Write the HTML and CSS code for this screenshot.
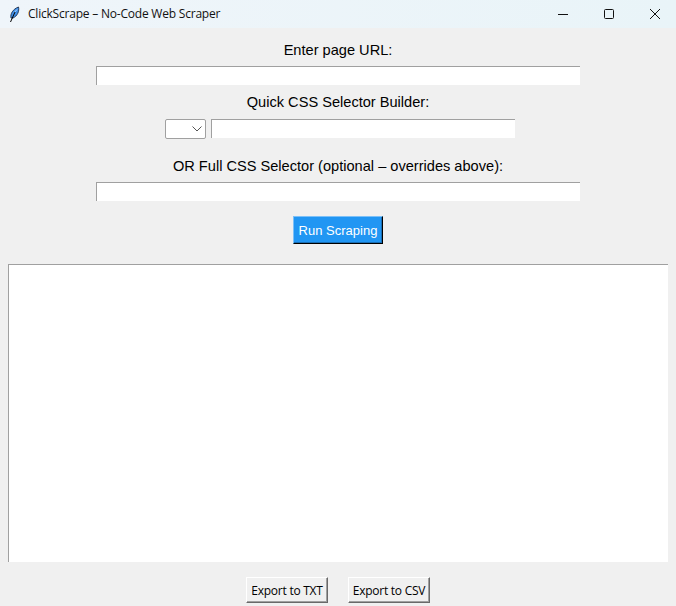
FILE: index.html
```html
<!DOCTYPE html>
<html lang="en">
<head>
<meta charset="utf-8">
<title>ClickScrape – No-Code Web Scraper</title>
<link rel="stylesheet" href="styles.css">
</head>
<body>
<div class="window">
  <header class="titlebar">
    <svg class="app-icon" width="16" height="18" viewBox="0 0 16 18">
      <path d="M5 13 C4 9 7 4 12.5 2 C13.5 6 11.5 11 7 13 Z" fill="#3f8fe8" stroke="#1a2c4a" stroke-width="0.9"/>
      <path d="M8 8 L11 4.5" stroke="#bcdcfa" stroke-width="0.9" fill="none"/>
      <path d="M4.5 17 L9 7" stroke="#000" stroke-width="1" fill="none"/>
    </svg>
    <span class="title">ClickScrape – No-Code Web Scraper</span>
    <div class="controls">
      <span class="ctl"><svg width="12" height="12" viewBox="0 0 12 12"><path d="M1 6.5H11" stroke="#111" stroke-width="1"/></svg></span>
      <span class="ctl"><svg width="12" height="12" viewBox="0 0 12 12"><rect x="1.5" y="1.5" width="9" height="9" rx="1" fill="none" stroke="#111" stroke-width="1"/></svg></span>
      <span class="ctl"><svg width="12" height="12" viewBox="0 0 12 12"><path d="M1 1L11 11M11 1L1 11" stroke="#111" stroke-width="1"/></svg></span>
    </div>
  </header>
  <main class="content">
    <label class="label label-url">Enter page URL:</label>
    <input class="entry entry-wide" type="text">
    <label class="label label-quick">Quick CSS Selector Builder:</label>
    <div class="builder">
      <div class="combo">
        <svg width="10" height="6" viewBox="0 0 10 6"><path d="M0.5 0.5L5 5L9.5 0.5" fill="none" stroke="#555" stroke-width="1"/></svg>
      </div>
      <input class="entry entry-mid" type="text">
    </div>
    <label class="label label-full">OR Full CSS Selector (optional – overrides above):</label>
    <input class="entry entry-wide" type="text">
    <button class="run" type="button">Run Scraping</button>
    <div class="output"></div>
    <div class="exports">
      <button class="export" type="button">Export to TXT</button>
      <button class="export" type="button">Export to CSV</button>
    </div>
  </main>
</div>
</body>
</html>
```
FILE: styles.css
```css
* { box-sizing: border-box; }
html, body { margin: 0; padding: 0; }
body { background: #f0f0f0; overflow: hidden; }
.window { width: 676px; height: 606px; display: flex; flex-direction: column; }
.titlebar {
  height: 28px;
  display: flex;
  align-items: center;
  padding-left: 6px;
  background: linear-gradient(90deg, #eff5fa 0%, #e9f4f8 100%);
}
.app-icon { flex: none; }
.title {
  margin-left: 6px;
  margin-bottom: 2px;
  font: 12px "Open Sans", "Noto Sans", sans-serif;
  color: #111;
  letter-spacing: -0.21px;
}
.controls { margin-left: auto; margin-right: -2px; display: flex; }
.ctl { width: 46px; height: 28px; display: flex; align-items: center; justify-content: center; }
.content { flex: 1; display: flex; flex-direction: column; align-items: center; }
.label {
  font: 14.6px/20px "Liberation Sans", Arial, sans-serif;
  color: #000;
  text-align: center;
}
.label-url { margin-top: 12px; }
.label-quick { margin-top: 7px; }
.label-full { margin-top: 17px; }
.entry {
  display: block;
  height: 19px;
  background: #fff;
  border: 0;
  border-top: 1px solid #a0a0a0;
  border-left: 1px solid #a0a0a0;
  padding: 0;
  outline: none;
  border-radius: 0;
}
.label-url + .entry { margin-top: 6px; }
.label-full + .entry { margin-top: 6px; }
.entry-wide { width: 484px; }
.entry-mid { width: 304px; }
.builder { display: flex; gap: 5px; margin-top: 7px; padding-left: 4px; align-items: flex-start; }
.combo {
  width: 41px;
  height: 20px;
  background: #fff;
  border: 1px solid #a0a0a0;
  border-radius: 2px;
  display: flex;
  align-items: center;
  justify-content: flex-end;
  padding-right: 3px;
}
.run {
  width: 90px;
  height: 28px;
  margin-top: 15px;
  padding: 0;
  background: #2196f3;
  color: #fff;
  font: 13px "Liberation Sans", Arial, sans-serif;
  border: 1px solid #000;
  border-top-color: #7cc0f8;
  border-left-color: #7cc0f8;
  box-shadow: inset -1px -1px 0 #1a6fb5;
  border-radius: 0;
}
.output {
  width: 660px;
  height: 298px;
  margin-top: 20px;
  background: #fff;
  border-top: 1px solid #a0a0a0;
  border-left: 1px solid #a0a0a0;
}
.exports { display: flex; gap: 20px; margin-top: 15px; }
.export {
  width: 82px;
  height: 26px;
  padding: 0;
  background: #f0f0f0;
  color: #000;
  font: 12px "Open Sans", "Noto Sans", sans-serif;
  letter-spacing: -0.25px;
  border: 1px solid #fff;
  border-right-color: #696969;
  border-bottom-color: #696969;
  box-shadow: inset -1px -1px 0 #a0a0a0;
  border-radius: 0;
}
```
